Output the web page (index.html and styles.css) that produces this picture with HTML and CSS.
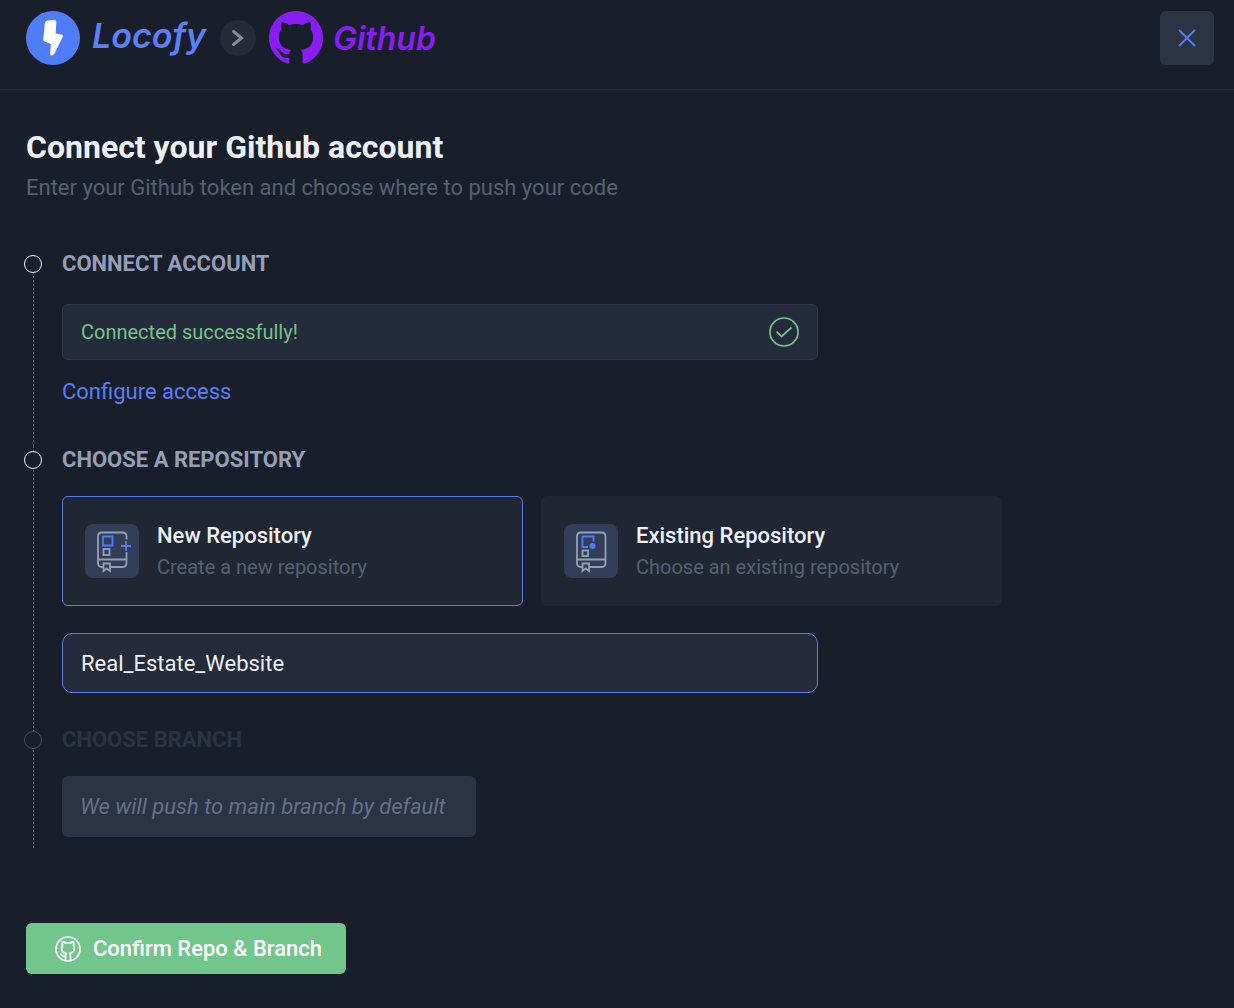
FILE: index.html
```html
<!DOCTYPE html>
<html lang="en">
<head>
<meta charset="utf-8">
<meta name="viewport" content="width=device-width, initial-scale=1">
<title>Connect your Github account</title>
<link rel="stylesheet" href="styles.css">
</head>
<body>
<header class="topbar">
  <div class="brands">
    <svg class="brand-icon" viewBox="0 0 54 54" aria-hidden="true">
      <circle cx="27" cy="27" r="27" fill="#4f7df9"/>
      <path d="M21.500 9.500 28 9Q30.500 9 30.300 11.500L29.700 22.500 35.500 23.500Q37.600 24 36.700 26L28.500 42.500Q26.800 45.300 24.800 44.300 23.700 43.600 24 42L25 33 18.500 30.500Q17 29.800 17.200 28L18.900 12Q19.200 9.700 21.500 9.500Z" fill="#fff"/>
    </svg>
    <span class="brand-name locofy">Locofy</span>
    <span class="arrow">
      <svg width="36" height="36" viewBox="0 0 36 36" aria-hidden="true"><path d="M13.500 11.500l8 6.500-8 6.500" fill="none" stroke="#868e9c" stroke-width="3" stroke-linecap="round"/></svg>
    </span>
    <svg class="brand-icon" viewBox="0 0.300 24 24" aria-hidden="true"><path fill="#8a1cf6" d="M12 .297c-6.630 0-12 5.373-12 12 0 5.303 3.438 9.800 8.205 11.385.6.113.82-.258.82-.577 0-.285-.01-1.040-.015-2.040-3.338.724-4.042-1.610-4.042-1.610C4.422 18.070 3.633 17.700 3.633 17.700c-1.087-.744.084-.729.084-.729 1.205.084 1.838 1.236 1.838 1.236 1.070 1.835 2.809 1.305 3.495.998.108-.776.417-1.305.76-1.605-2.665-.3-5.466-1.332-5.466-5.930 0-1.310.465-2.380 1.235-3.220-.135-.303-.54-1.523.105-3.176 0 0 1.005-.322 3.300 1.230.96-.267 1.980-.399 3-.405 1.020.006 2.040.138 3 .405 2.280-1.552 3.285-1.230 3.285-1.230.645 1.653.24 2.873.12 3.176.765.84 1.230 1.910 1.230 3.220 0 4.610-2.805 5.625-5.475 5.920.42.36.81 1.096.81 2.220 0 1.606-.015 2.896-.015 3.286 0 .315.21.69.825.57C20.565 22.092 24 17.592 24 12.297c0-6.627-5.373-12-12-12"/></svg>
    <span class="brand-name github">Github</span>
  </div>
  <button class="close" type="button" aria-label="Close">
    <svg width="18" height="18" viewBox="0 0 18 18" aria-hidden="true"><path d="M1 1l16 16M17 1L1 17" stroke="#5b7df0" stroke-width="1.800"/></svg>
  </button>
</header>

<main class="page">
  <h1>Connect your Github account</h1>
  <p class="lead">Enter your Github token and choose where to push your code</p>

  <form>
    <ol class="steps">
      <li class="step">
        <span class="marker"></span>
        <div class="step-body">
          <h2>Connect account</h2>
          <div class="status">
            <span>Connected successfully!</span>
            <svg width="30" height="30" viewBox="0 0 30 30" fill="none" stroke="#72c58b" stroke-width="1.700" aria-hidden="true"><circle cx="15" cy="15" r="14"/><path d="M7.500 14.500l5 5L22.500 10.500"/></svg>
          </div>
          <a class="configure" href="#">Configure access</a>
        </div>
      </li>

      <li class="step">
        <span class="marker"></span>
        <div class="step-body">
          <h2>Choose a repository</h2>
          <div class="cards">
            <label class="card">
              <input type="radio" name="repo" value="new" checked>
              <svg class="card-icon" viewBox="0 0 54 54" fill="none" stroke="#94a0b8" stroke-width="1.800" aria-hidden="true">
                <path d="M41.500 15.500V12.500Q41.500 8.500 37.500 8.500H17Q13 8.500 13 12.500V39Q13 43 17 43H18.500M25 43H37.500Q41.500 43 41.500 39V28M13 35.500H41.500"/>
                <path d="M18.500 39.500H25V47L21.700 44.500 18.500 47Z"/>
                <rect x="18.500" y="25" width="6" height="6"/>
                <path stroke="#4f7df9" d="M18 12.500H27.500V21.500H18ZM41 17V27M36 22H46"/>
              </svg>
              <span class="card-text"><span class="card-title">New Repository</span><span class="card-note">Create a new repository</span></span>
            </label>
            <label class="card">
              <input type="radio" name="repo" value="existing">
              <svg class="card-icon" viewBox="0 0 54 54" fill="none" stroke="#94a0b8" stroke-width="1.800" aria-hidden="true">
                <path d="M18.500 43H17Q13 43 13 39V12.500Q13 8.500 17 8.500H37.500Q41.500 8.500 41.500 12.500V39Q41.500 43 37.500 43H25M13 35.500H41.500"/>
                <path d="M18.500 39.500H25V47L21.700 44.500 18.500 47Z"/>
                <rect x="18.500" y="26.500" width="5.500" height="5.500"/>
                <path stroke="#4f7df9" d="M24 23H18.500V12.500H29.500V17.500"/>
                <circle cx="28.500" cy="22" r="3" fill="#4f7df9" stroke="none"/>
              </svg>
              <span class="card-text"><span class="card-title">Existing Repository</span><span class="card-note">Choose an existing repository</span></span>
            </label>
          </div>
          <input class="repo-name" type="text" value="Real_Estate_Website" aria-label="Repository name">
        </div>
      </li>

      <li class="step pending">
        <span class="marker"></span>
        <div class="step-body">
          <h2>Choose branch</h2>
          <input class="branch" type="text" placeholder="We will push to main branch by default" aria-label="Branch" disabled>
        </div>
      </li>
    </ol>

    <button class="confirm" type="submit">
      <svg width="26" height="26" viewBox="0 0 26 26" fill="none" stroke="#fff" stroke-width="1.700" stroke-linejoin="round" aria-hidden="true">
        <circle cx="13" cy="13" r="12"/>
        <path d="M10.500 24V20.500C7.500 21 7.500 19 5.500 17.800M10.500 20.500Q10.300 18.500 11.300 17.400C8.500 17 6.700 15.300 6.700 12.300Q6.700 10.600 7.500 9.400 7 7.500 7.500 5.800 8.900 5.700 10.600 7Q13 6.400 15.400 7 17.100 5.700 18.500 5.800 19 7.500 18.500 9.400 19.300 10.600 19.300 12.300C19.300 15.300 17.500 17 14.700 17.400Q15.700 18.500 15.500 20.500V24"/>
      </svg>
      Confirm Repo &amp; Branch
    </button>
  </form>
</main>
</body>
</html>
```
FILE: styles.css
```css
*,
*::before {
  box-sizing: border-box;
}

body {
  margin: 0;
  background: #191f2a;
  color: #edf1ff;
  font: 400 22px/28px Roboto, "Liberation Sans", sans-serif;
}

h1,
h2,
p,
ol {
  margin: 0;
  padding: 0;
}

/* Top bar */
.topbar {
  display: flex;
  justify-content: space-between;
  padding: 11px 20px 24px 26px;
  border-bottom: 1px solid #242a37;
}

.brands {
  display: flex;
  align-items: center;
}

.brand-icon {
  width: 54px;
  height: 54px;
}

.brand-name {
  font: italic 600 32px/40px Inter, sans-serif;
}

.locofy {
  margin: 0 14px 0 12px;
  padding-bottom: 4px;
  color: #5b80f7;
  font-size: 34px;
}

.github {
  margin-left: 10px;
  padding-top: 2px;
  color: #8a1cf6;
}

.arrow {
  display: flex;
  margin-right: 13px;
  border-radius: 50%;
  background: #252b38;
}

.close {
  display: grid;
  place-items: center;
  width: 54px;
  height: 54px;
  padding: 0;
  border: 0;
  border-radius: 6px;
  background: #2b3445;
}

/* Page */
.page {
  padding: 37px 26px 34px;
}

h1 {
  font-size: 32px;
  font-weight: 700;
  line-height: 40px;
}

.lead {
  margin-top: 7px;
  color: #566074;
}

/* Steps */
.steps {
  margin: 48px 0 74px -2px;
  list-style: none;
}

.step {
  display: flex;
  gap: 20px;
}

.marker {
  flex: none;
  width: 18px;
  padding-top: 5px;
  background: repeating-linear-gradient(#596070 0 2px, transparent 2px 4px) 9px 0 / 1px 100% no-repeat;
}

.step:first-child .marker {
  background-position-y: 14px;
}

.marker::before {
  content: "";
  display: block;
  height: 18px;
  border: 1px solid #edf1ff;
  border-radius: 50%;
  background: #191f2a;
}

.pending .marker::before {
  border-color: #464d5b;
}

.step-body {
  flex: 1;
  padding-bottom: 33px;
}

.step:first-child .step-body {
  padding-bottom: 40px;
}

.pending .step-body {
  padding-bottom: 12px;
}

h2 {
  margin-bottom: 22px;
  color: #949eb6;
  font-size: 22px;
  font-weight: 700;
  line-height: 28px;
  text-transform: uppercase;
}

.pending h2 {
  color: #2a3344;
}

.status {
  display: flex;
  align-items: center;
  justify-content: space-between;
  max-width: 756px;
  height: 56px;
  margin: 26px 0 18px;
  padding: 0 18px;
  border: 1px solid #2c3445;
  border-radius: 6px;
  background: #242b3a;
  color: #72c58b;
  font-size: 20px;
}

.configure {
  display: block;
  width: fit-content;
  color: #5580f6;
  text-decoration: none;
}

/* Repository cards */
.cards {
  display: grid;
  grid-template-columns: 1fr 1fr;
  gap: 18px;
  max-width: 940px;
  margin-bottom: 27px;
}

.card {
  display: flex;
  align-items: center;
  gap: 18px;
  height: 110px;
  padding: 0 22px;
  border: 1px solid transparent;
  border-radius: 6px;
  background: #202733 border-box;
}

.card:has(:checked) {
  border-color: #587ce6;
}

.card input {
  position: absolute;
  opacity: 0;
}

.card-icon {
  flex: none;
  width: 54px;
  height: 54px;
  border-radius: 8px;
  background: #323e57;
}

.card-text {
  display: grid;
  gap: 3px;
}

.card-title {
  font-weight: 500;
}

.card-note {
  color: #566074;
  font-size: 20px;
}

/* Text fields */
.repo-name,
.branch {
  display: block;
  width: 100%;
  height: 60px;
  padding: 0 18px;
  font: inherit;
}

.repo-name {
  max-width: 756px;
  border: 1px solid #587ce6;
  border-radius: 10px;
  outline: 0;
  background: #252b3a;
  color: #edf1ff;
}

.branch {
  max-width: 414px;
  height: 61px;
  border: 0;
  border-radius: 6px;
  background: #2b3445;
}

.branch::placeholder {
  color: #647087;
  font-style: italic;
  opacity: 1;
}

.confirm {
  display: flex;
  align-items: center;
  gap: 12px;
  height: 51px;
  padding: 0 24px 0 29px;
  border: 0;
  border-radius: 6px;
  background: #72c58b;
  color: #fff;
  font: inherit;
  font-weight: 500;
}
```
